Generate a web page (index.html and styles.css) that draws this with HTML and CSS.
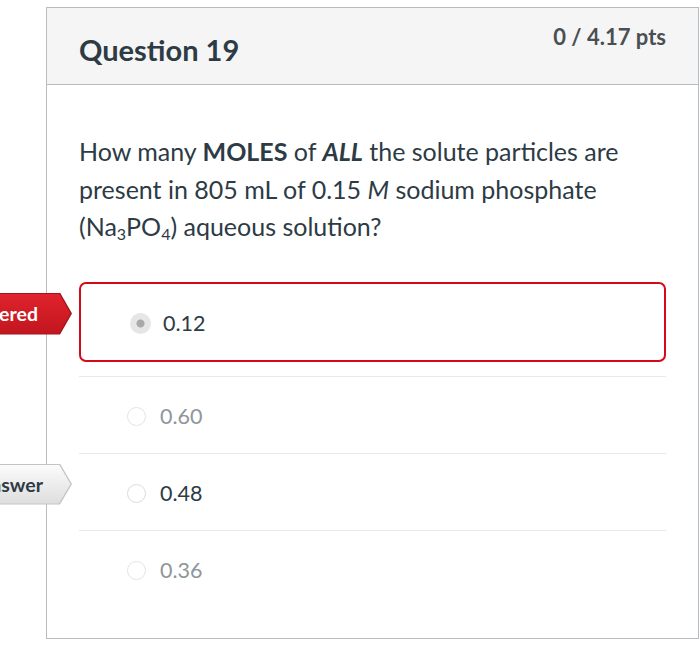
FILE: index.html
```html
<!DOCTYPE html>
<html lang="en">
<head>
<meta charset="utf-8">
<title>Question 19</title>
<link rel="stylesheet" href="styles.css">
</head>
<body>
<div class="page">
  <div class="card">
    <div class="header">
      <h2 class="title">Question 19</h2>
      <div class="pts">0 / 4.17 pts</div>
    </div>
    <div class="body">
      <p class="question">How many <strong>MOLES</strong> of <strong><em>ALL</em></strong> the solute particles are present in 805 mL of 0.15 <em>M</em> sodium phosphate (Na<sub>3</sub>PO<sub>4</sub>) aqueous solution?</p>
      <div class="answers">
        <div class="answer answer-wrong">
          <span class="tag tag-red"><span class="tag-text">You Answered</span></span>
          <span class="radio radio-checked"></span>
          <span class="label">0.12</span>
        </div>
        <div class="answer answer-row faded">
          <span class="radio"></span>
          <span class="label">0.60</span>
        </div>
        <div class="answer answer-row">
          <span class="tag tag-gray"><span class="tag-text">Correct Answer</span></span>
          <span class="radio"></span>
          <span class="label">0.48</span>
        </div>
        <div class="answer answer-row faded">
          <span class="radio"></span>
          <span class="label">0.36</span>
        </div>
      </div>
    </div>
  </div>
</div>
</body>
</html>
```
FILE: styles.css
```css
html, body {
  margin: 0;
  padding: 0;
  background: #ffffff;
}
body {
  font-family: Lato, "Open Sans", "Liberation Sans", sans-serif;
  color: #2d3b45;
  overflow: hidden;
}
.page {
  padding: 7px 0 0 46px;
}
.card {
  box-sizing: border-box;
  width: 653px;
  height: 632px;
  border: 1px solid #b8bcbf;
  background: #ffffff;
}
.header {
  box-sizing: border-box;
  height: 77px;
  background: #f5f5f5;
  border-bottom: 1px solid #b8bcbf;
  display: flex;
  justify-content: space-between;
  align-items: flex-start;
  padding: 0 32px;
}
.title {
  margin: 0;
  padding-top: 25px;
  font-size: 29px;
  font-weight: 700;
  line-height: 1.2;
  color: #2d3b45;
}
.pts {
  padding-top: 16px;
  font-size: 22px;
  font-weight: 700;
  line-height: 1.2;
  color: #4a4f53;
}
.body {
  padding: 48px 32px 0 32px;
}
.question {
  margin: 0;
  font-size: 25px;
  line-height: 37.5px;
  color: #2d3b45;
}
.question strong {
  font-weight: 700;
}
.question sub {
  font-size: 16px;
  line-height: 0;
  vertical-align: -4px;
}
.answers {
  margin-top: 36px;
  display: flex;
  flex-direction: column;
}
.answer {
  position: relative;
  display: flex;
  align-items: center;
  box-sizing: border-box;
  padding-top: 4px;
}
.answer-wrong {
  height: 80px;
  border: 2px solid #d40a1c;
  border-radius: 7px;
  padding-left: 49px;
  margin-bottom: 14px;
}
.answer-row {
  height: 77px;
  border-top: 1px solid #e8e9ea;
  padding-left: 48px;
}
.radio {
  box-sizing: border-box;
  flex: none;
  width: 19px;
  height: 19px;
  border-radius: 50%;
  border: 1.5px solid #dcdcdc;
  background: #ffffff;
  margin-right: 14px;
}
.radio-checked {
  width: 21px;
  height: 21px;
  border: none;
  background: radial-gradient(circle, #a9a9a9 0 3.5px, #e6e6e6 4.5px);
  margin-right: 12px;
}
.label {
  font-size: 21.5px;
  line-height: 1;
  color: #2d3b45;
}
.faded .label {
  color: #8f969b;
}
.faded .radio {
  border-color: #e4e4e4;
}
.tag {
  position: absolute;
  top: 9px;
  height: 42px;
  display: flex;
  align-items: center;
  justify-content: flex-end;
  padding: 0 34px 0 12px;
  white-space: nowrap;
  clip-path: polygon(0 0, calc(100% - 12px) 0, 100% 50%, calc(100% - 12px) 100%, 0 100%);
  z-index: 2;
}
.tag::before {
  content: "";
  position: absolute;
  inset: 1px 1.5px 1px 0;
  clip-path: polygon(0 0, calc(100% - 11.5px) 0, 100% 50%, calc(100% - 11.5px) 100%, 0 100%);
}
.tag-text {
  position: relative;
  font-size: 19.5px;
  font-weight: 700;
}
.tag-red {
  right: calc(100% + 9px);
  background: #a5121a;
}
.tag-red::before {
  background: linear-gradient(#e0232c, #c1161f);
}
.tag-red .tag-text {
  color: #ffffff;
}
.tag-gray {
  top: 10px;
  height: 41px;
  right: calc(100% + 7px);
  padding-right: 29px;
  background: #c4c4c4;
}
.tag-gray::before {
  background: linear-gradient(#fbfbfb, #dedede);
}
.tag-gray .tag-text {
  color: #2d3b45;
}
```
